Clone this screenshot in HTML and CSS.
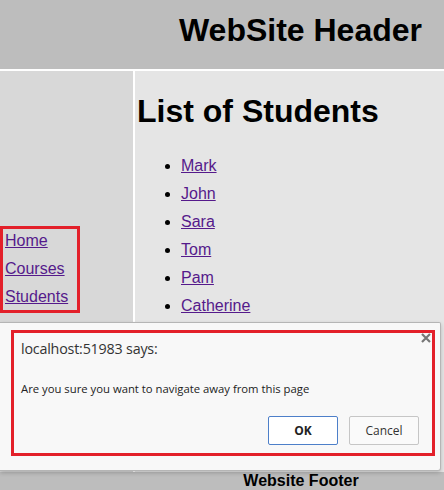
FILE: index.html
```html
<!DOCTYPE html>
<html>
<head>
<meta charset="utf-8">
<link rel="stylesheet" href="styles.css">
</head>
<body>
<div class="page">
  <header class="header"><h1 class="site-title">WebSite Header</h1></header>
  <div class="main">
    <aside class="sidebar">
      <nav class="nav">
        <a href="#" class="nav-link">Home</a>
        <a href="#" class="nav-link">Courses</a>
        <a href="#" class="nav-link">Students</a>
      </nav>
    </aside>
    <section class="content">
      <h1 class="content-title">List of Students</h1>
      <ul class="students">
        <li><a href="#">Mark</a></li>
        <li><a href="#">John</a></li>
        <li><a href="#">Sara</a></li>
        <li><a href="#">Tom</a></li>
        <li><a href="#">Pam</a></li>
        <li><a href="#">Catherine</a></li>
      </ul>
    </section>
  </div>
  <footer class="footer"><span class="footer-text">Website Footer</span></footer>
</div>
<div class="dialog">
  <svg class="dialog-close" width="10" height="10" viewBox="0 0 10 10"><path d="M1 1L9 9M9 1L1 9" stroke="#767676" stroke-width="2.2"/></svg>
  <div class="dialog-inner">
    <div class="dialog-title">localhost:51983 says:</div>
    <div class="dialog-msg">Are you sure you want to navigate away from this page</div>
    <div class="dialog-buttons">
      <button class="btn btn-ok">OK</button>
      <button class="btn btn-cancel">Cancel</button>
    </div>
  </div>
</div>
</body>
</html>
```
FILE: styles.css
```css
* { box-sizing: border-box; }
html, body { margin: 0; padding: 0; }
body {
  width: 444px;
  height: 490px;
  overflow: hidden;
  font-family: "Liberation Sans", Arial, sans-serif;
  background: #ffffff;
  position: relative;
}
.page {
  display: flex;
  flex-direction: column;
  height: 490px;
}
.header {
  height: 69px;
  background: #bdbdbd;
  display: flex;
  justify-content: flex-end;
  padding-right: 22px;
  margin-bottom: 2px;
}
.site-title {
  margin: 12px 0 0 0;
  font-size: 32px;
  font-weight: bold;
  color: #000;
  line-height: 36px;
}
.main {
  display: flex;
  height: 401px;
  gap: 2px;
}
.sidebar {
  width: 133px;
  background: #d8d8d8;
  padding-top: 155px;
}
.nav {
  display: flex;
  flex-direction: column;
  gap: 4px;
  width: 80px;
  height: 87px;
  border: 3px solid #e3202a;
  padding: 0 0 0 2px;
}
.nav-link, .students a {
  color: #551a8b;
  font-size: 16px;
  text-decoration: underline;
}
.nav-link { line-height: 24px; }
.content {
  flex: 1;
  background: #e5e5e5;
  padding-left: 2px;
}
.content-title {
  margin: 22px 0 0 0;
  font-size: 32px;
  line-height: 36px;
  font-weight: bold;
  color: #000;
}
.students {
  margin: 23px 0 0 0;
  padding-left: 44px;
}
.students li { line-height: 28px; font-size: 16px; }
.footer {
  height: 18px;
  background: #bdbdbd;
  display: flex;
  justify-content: center;
  padding-left: 158px;
}
.footer-text {
  font-weight: bold;
  font-size: 16px;
  line-height: 18px;
  color: #000;
}
.dialog {
  position: absolute;
  left: 0;
  top: 322px;
  width: 441px;
  height: 149px;
  background: #f8f8f8;
  border: 1px solid #b5b5b5;
  border-left: none;
  border-radius: 0 2px 3px 0;
  box-shadow: 0 2px 4px rgba(0,0,0,0.2);
  padding: 7px 5px 0 11px;
}
.dialog-close {
  position: absolute;
  right: 9px;
  top: 10px;
}
.dialog-inner {
  width: 424px;
  height: 126px;
  border: 3px solid #e3202a;
  padding: 6px 0 0 7px;
  font-family: "Open Sans", "Noto Sans", sans-serif;
}
.dialog-title {
  font-size: 14.3px;
  color: #333;
  line-height: 20px;
  letter-spacing: -0.2px;
}
.dialog-msg {
  margin-top: 22px;
  font-size: 11.3px;
  color: #222;
  line-height: 16px;
}
.dialog-buttons {
  display: flex;
  justify-content: flex-end;
  gap: 11px;
  margin-top: 19px;
  padding-right: 13px;
}
.btn {
  width: 70px;
  height: 29px;
  font-family: "Open Sans", "Noto Sans", sans-serif;
  font-size: 12px;
  color: #333;
  border-radius: 2px;
  padding: 0;
}
.btn-ok {
  background: #fff;
  border: 1px solid #4d7fc9;
  font-weight: bold;
  color: #222;
}
.btn-cancel {
  background: #fafafa;
  border: 1px solid #c6c6c6;
}
```
